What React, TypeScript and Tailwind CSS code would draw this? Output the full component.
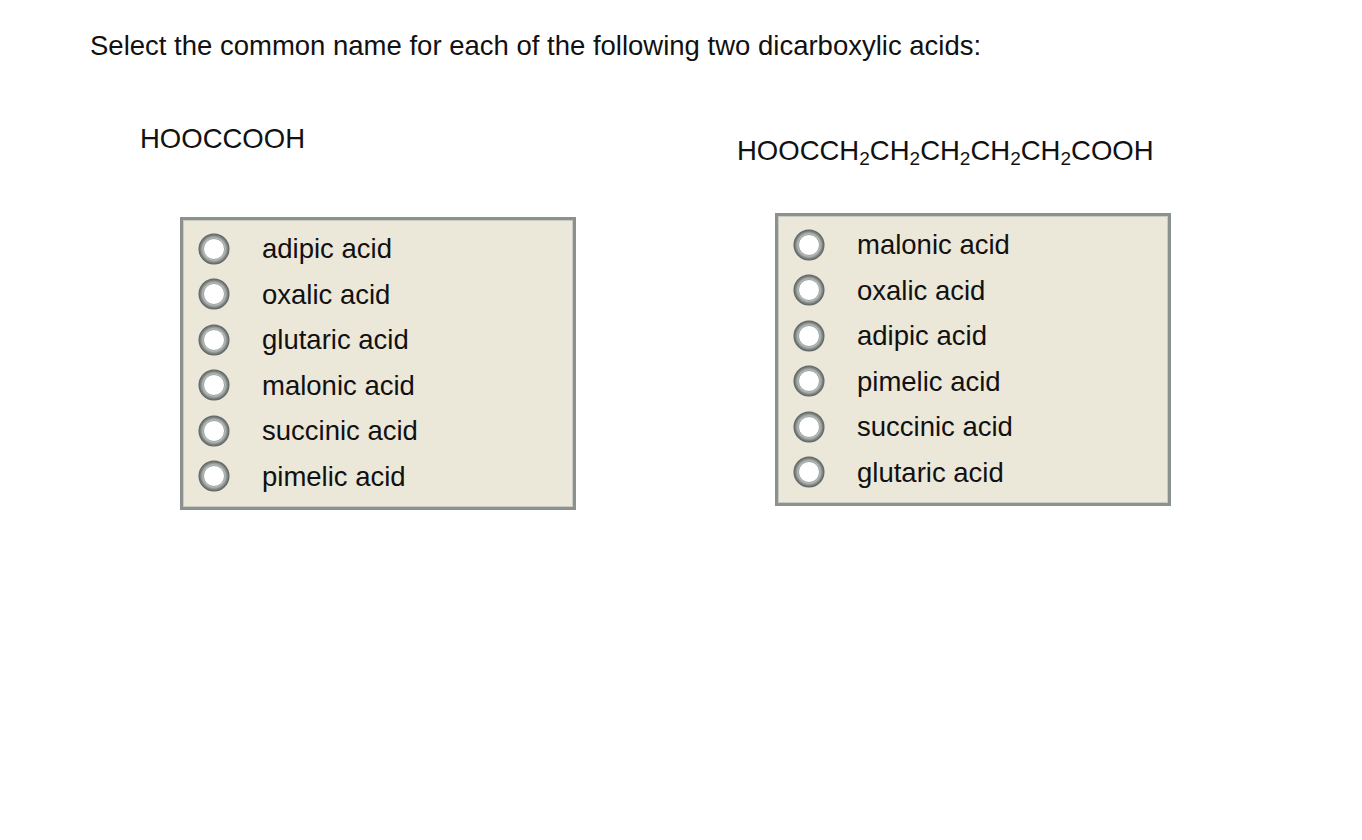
import React from "react";

const left = ["adipic acid", "oxalic acid", "glutaric acid", "malonic acid", "succinic acid", "pimelic acid"];
const right = ["malonic acid", "oxalic acid", "adipic acid", "pimelic acid", "succinic acid", "glutaric acid"];

function Radio({ id }: { id: string }) {
  return (
    <svg width="32" height="32" viewBox="0 0 32 32" className="shrink-0">
      <defs>
        <radialGradient id={id} cx="50%" cy="50%" r="50%">
          <stop offset="0.62" stopColor="#dfe2e1" />
          <stop offset="0.76" stopColor="#a6acaa" />
          <stop offset="0.9" stopColor="#727977" />
          <stop offset="1" stopColor="#585f5d" />
        </radialGradient>
      </defs>
      <circle cx="16" cy="16" r="15.5" fill={`url(#${id})`} />
      <circle cx="16" cy="16" r="10.5" fill="#ffffff" stroke="#9ca2a0" strokeWidth="1" />
    </svg>
  );
}

function Choices({ items, name }: { items: string[]; name: string }) {
  return (
    <div className="w-[396px] border-[3px] border-[#8b918f] bg-[#ebe7d9] shadow-[inset_0_0_0_1px_#c9cbc2]">
      <ul className="flex flex-col pt-[6px] pb-[8px] pl-[15px]">
        {items.map((t, i) => (
          <li key={name + t} className="flex h-[45.5px] items-center">
            <Radio id={`rg-${name}-${i}`} />
            <span className="ml-[32px] text-[27.5px] leading-none text-[#111]">{t}</span>
          </li>
        ))}
      </ul>
    </div>
  );
}

function Sub({ children }: { children: React.ReactNode }) {
  return <sub className="-bottom-[5px] text-[19px] leading-none">{children}</sub>;
}

export default function App() {
  return (
    <div className="min-h-[840px] w-[1362px] bg-white font-['Liberation_Sans',Arial,sans-serif] text-[#111]">
      <div className="pl-[90px] pt-[30px]">
        <h1 className="text-[27.5px] leading-[32px] font-normal whitespace-nowrap">
          Select the common name for each of the following two dicarboxylic acids:
        </h1>
      </div>
      <div className="flex pl-[180px] pt-[49px]">
        <div className="flex flex-col">
          <div className="-ml-[40px] mt-[12px] h-[32px] text-[27.5px] leading-[32px]">HOOCCOOH</div>
          <div className="mt-[62px]">
            <Choices items={left} name="a" />
          </div>
        </div>
        <div className="ml-[199px] flex flex-col">
          <div className="-ml-[38px] mt-[24px] h-[32px] text-[27.5px] leading-[32px] whitespace-nowrap">
            HOOCCH<Sub>2</Sub>CH<Sub>2</Sub>CH<Sub>2</Sub>CH<Sub>2</Sub>CH<Sub>2</Sub>COOH
          </div>
          <div className="mt-[46px]">
            <Choices items={right} name="b" />
          </div>
        </div>
      </div>
    </div>
  );
}
